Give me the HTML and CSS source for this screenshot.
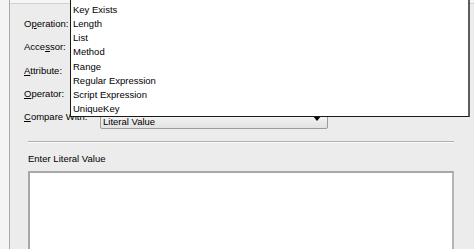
FILE: index.html
```html
<!DOCTYPE html>
<html>
<head>
<meta charset="utf-8">
<link rel="stylesheet" href="styles.css">
</head>
<body>
<div class="window">
  <div class="rail"></div>
  <div class="panel">
    <div class="form">
      <div class="label">O<u>p</u>eration:</div><div class="cell"></div>
      <div class="label">Acce<u>s</u>sor:</div><div class="cell"></div>
      <div class="label"><u>A</u>ttribute:</div><div class="cell"></div>
      <div class="label"><u>O</u>perator:</div><div class="cell"></div>
      <div class="label"><u>C</u>ompare With:</div>
      <div class="cell"><div class="combo"><span class="combo-text">Literal Value</span><span class="arrow"></span></div></div>
    </div>
    <div class="section">
      <div class="sep"></div>
      <div class="caption">Enter Literal Value</div>
      <div class="textbox"></div>
    </div>
  </div>
  <ul class="list">
    <li>Key Exists</li>
    <li>Length</li>
    <li>List</li>
    <li>Method</li>
    <li>Range</li>
    <li>Regular Expression</li>
    <li>Script Expression</li>
    <li>UniqueKey</li>
  </ul>
</div>
</body>
</html>
```
FILE: styles.css
```css
html, body {
  margin: 0;
  padding: 0;
}
body {
  background: #f5f5f5;
  font-family: "Liberation Sans", Arial, sans-serif;
  font-size: 9.5px;
  color: #000;
}
.window {
  position: relative;
  display: flex;
  width: 474px;
  height: 249px;
  overflow: hidden;
}
.rail {
  width: 9px;
  flex: none;
  background: #f4f4f4;
  border-right: 1px solid #a9a9a9;
}
.panel {
  flex: 1;
  margin-top: 3px;
  border-top: 1px solid #d2d2d2;
  background: #ececec;
  padding: 8px 0 0 14px;
  display: flex;
  flex-direction: column;
}
.form {
  display: grid;
  grid-template-columns: 76px 228px;
  grid-auto-rows: 23.25px;
}
.label {
  display: flex;
  align-items: center;
  white-space: nowrap;
}
.cell {
  display: flex;
  align-items: flex-end;
}
.combo {
  box-sizing: border-box;
  width: 228px;
  height: 17px;
  margin-bottom: -1px;
  border: 1px solid #9c9c9c;
  border-radius: 2px;
  background: linear-gradient(#f7f7f7, #e2e2e2);
  display: flex;
  padding: 0 6px 0 2px;
}
.combo-text {
  line-height: 12px;
  padding-top: 3px;
}
.arrow {
  margin-left: auto;
  margin-top: 3px;
  width: 0;
  height: 0;
  border-left: 4px solid transparent;
  border-right: 4px solid transparent;
  border-top: 5px solid #000;
}
.section {
  margin: 13px 0 0 4px;
  width: 426px;
}
.sep {
  border-top: 1px solid #b0b0b0;
  border-bottom: 1px solid #fafafa;
}
.caption {
  margin-top: 10px;
  line-height: 12px;
}
.textbox {
  margin-top: 6px;
  height: 100px;
  background: #fff;
  border: 2px solid #a8a8a8;
  border-right-color: #b4b4b4;
}
.list {
  position: absolute;
  left: 70px;
  top: -1px;
  width: 397px;
  margin: 0;
  padding: 2.9px 0 0 0;
  list-style: none;
  background: #fff;
  border: 1px solid #1a1a1a;
  border-right: 2px solid #5c5c5c;
}
.list li {
  height: 14.2px;
  line-height: 14.2px;
  padding-left: 2px;
  white-space: nowrap;
}
```
